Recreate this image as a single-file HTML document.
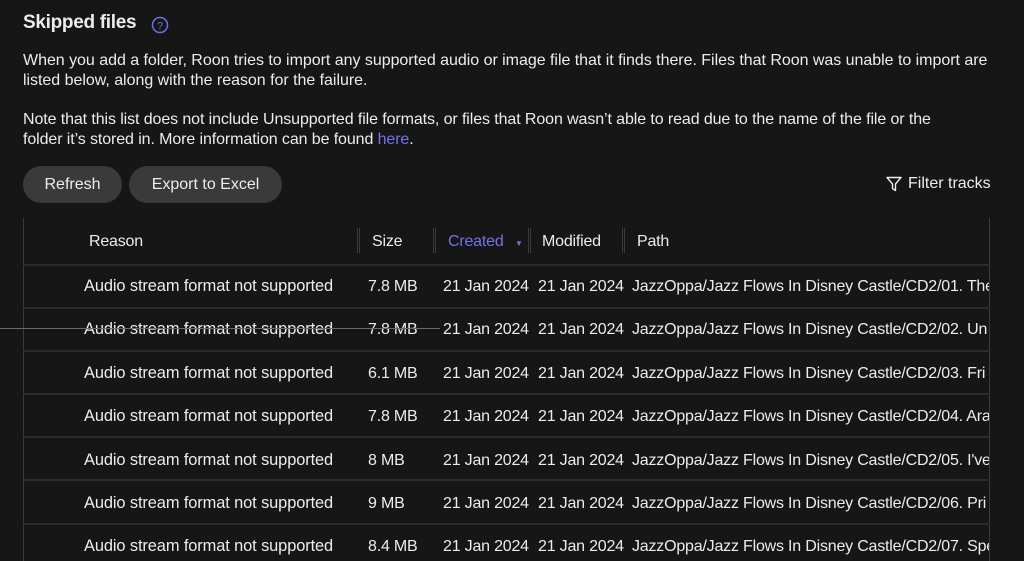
<!DOCTYPE html>
<html><head><style>
html,body{margin:0;padding:0;background:#161616;width:1024px;height:561px;overflow:hidden;font-family:"Liberation Sans",sans-serif;color:#ececec;position:relative}
.a{position:absolute;white-space:nowrap}
h1{position:absolute;left:23px;top:12px;margin:0;font-size:19px;font-weight:bold;letter-spacing:-0.3px}
.p{font-size:16px;left:23px;line-height:20px;letter-spacing:-0.03px}
.btn{position:absolute;top:166px;height:37px;border-radius:19px;background:#3a3a3a;font-size:16px;line-height:37px;text-align:center}
.hl{position:absolute;left:23px;width:967px;height:2px;background:#2b2b2b}
.sep{position:absolute;top:228px;width:3px;height:25px;border-left:1px solid #3a3a3a;border-right:1px solid #3a3a3a;box-sizing:border-box}
.t{font-size:16px;letter-spacing:-0.2px}
.col{position:absolute;top:265px;font-size:16px;letter-spacing:-0.2px;line-height:43.4px;white-space:nowrap}
</style></head><body>
<h1>Skipped files</h1>
<svg class="a" style="left:151px;top:16px" width="18" height="18" viewBox="0 0 18 18"><circle cx="9" cy="9" r="7.5" fill="none" stroke="#6f6ee0" stroke-width="1.5"/><text x="9" y="13.5" font-size="11" fill="#6f6ee0" text-anchor="middle" font-family="Liberation Sans">?</text></svg>
<div class="a p" style="top:51px">When you add a folder, Roon tries to import any supported audio or image file that it finds there. Files that Roon was unable to import are<br>listed below, along with the reason for the failure.</div>
<div class="a p" style="top:110px;letter-spacing:-0.1px">Note that this list does not include Unsupported file formats, or files that Roon wasn’t able to read due to the name of the file or the<br>folder it’s stored in. More information can be found <span style="color:#7472e6">here</span>.</div>
<div class="btn" style="left:23px;width:99px">Refresh</div>
<div class="btn" style="left:129px;width:153px">Export to Excel</div>
<svg class="a" style="left:885px;top:175px" width="18" height="18" viewBox="0 0 18 18"><path d="M2 2.5H16L10.5 9V15.5L7.5 13.5V9Z" fill="none" stroke="#ececec" stroke-width="1.4" stroke-linejoin="round"/></svg>
<div class="a t" style="left:908px;top:175px;letter-spacing:0">Filter tracks</div>
<div class="a" style="left:23px;top:218px;width:1px;height:343px;background:#3a3a3a"></div>
<div class="a" style="left:989px;top:218px;width:1px;height:343px;background:#3a3a3a"></div>
<div class="sep" style="left:357px"></div><div class="sep" style="left:433px"></div><div class="sep" style="left:528px"></div><div class="sep" style="left:622px"></div>
<div class="a t" style="left:89px;top:233px">Reason</div>
<div class="a t" style="left:372px;top:233px">Size</div>
<div class="a t" style="left:448px;top:233px;color:#7472e6">Created</div>
<div class="a" style="left:515px;top:239px;font-size:8px;color:#7472e6">▼</div>
<div class="a t" style="left:542px;top:233px">Modified</div>
<div class="a t" style="left:637px;top:233px">Path</div>
<div class="hl" style="top:264px"></div>
<div class="hl" style="top:307px"></div>
<div class="hl" style="top:350px"></div>
<div class="hl" style="top:393px"></div>
<div class="hl" style="top:436px"></div>
<div class="hl" style="top:479px"></div>
<div class="hl" style="top:523px"></div>
<div class="col" style="left:84px;font-size:16.4px;letter-spacing:-0.1px">Audio stream format not supported<br>Audio stream format not supported<br>Audio stream format not supported<br>Audio stream format not supported<br>Audio stream format not supported<br>Audio stream format not supported<br>Audio stream format not supported</div>
<div class="col" style="left:368px">7.8 MB<br>7.8 MB<br>6.1 MB<br>7.8 MB<br>8 MB<br>9 MB<br>8.4 MB</div>
<div class="col" style="left:443px">21 Jan 2024<br>21 Jan 2024<br>21 Jan 2024<br>21 Jan 2024<br>21 Jan 2024<br>21 Jan 2024<br>21 Jan 2024</div>
<div class="col" style="left:538px">21 Jan 2024<br>21 Jan 2024<br>21 Jan 2024<br>21 Jan 2024<br>21 Jan 2024<br>21 Jan 2024<br>21 Jan 2024</div>
<div class="col" style="left:632px;width:357px;overflow:hidden">JazzOppa/Jazz Flows In Disney Castle/CD2/01. The<br>JazzOppa/Jazz Flows In Disney Castle/CD2/02. Un<br>JazzOppa/Jazz Flows In Disney Castle/CD2/03. Fri<br>JazzOppa/Jazz Flows In Disney Castle/CD2/04. Ara<br>JazzOppa/Jazz Flows In Disney Castle/CD2/05. I've<br>JazzOppa/Jazz Flows In Disney Castle/CD2/06. Pri<br>JazzOppa/Jazz Flows In Disney Castle/CD2/07. Spe</div>
<div class="a" style="left:0;top:328px;width:440px;height:1px;background:#6a6a6a"></div>
</body></html>
